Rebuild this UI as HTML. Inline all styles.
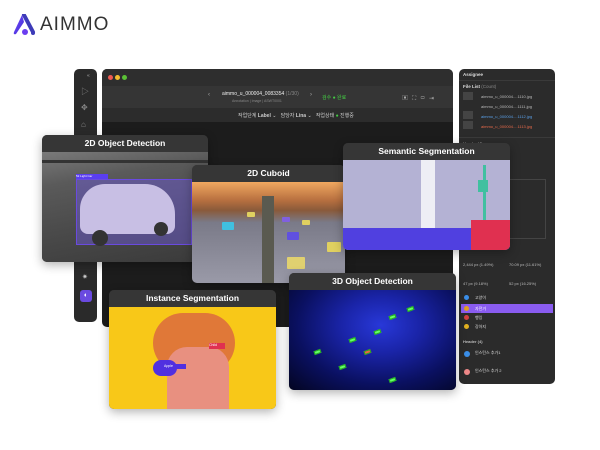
<!DOCTYPE html>
<html><head><meta charset="utf-8"><style>
*{margin:0;padding:0;box-sizing:border-box}
body{width:600px;height:450px;background:#fff;position:relative;overflow:hidden;font-family:"Liberation Sans","Noto Sans CJK KR",sans-serif}
.a{position:absolute}
.card{position:absolute;border-radius:5px;overflow:hidden;background:#333;box-shadow:0 3px 10px rgba(0,0,0,.3)}
.card .h{height:17px;background:#363636;color:#fff;font-weight:bold;font-size:8.5px;text-align:center;line-height:17px}
.card .b{position:absolute;left:0;right:0;top:17px;bottom:0;overflow:hidden}
.t{color:#bbb;font-size:4px;position:absolute}
.bx{position:absolute;width:8px;height:5px;border-radius:1px}
.gb{position:absolute;width:7px;height:4px;background:#6f6;border:1px solid #2a2;transform:rotate(-20deg)}
</style></head><body>
<svg class="a" style="left:12px;top:14px" width="24" height="22" viewBox="0 0 24 22">
<defs><linearGradient id="g" x1="0" y1="0" x2="1" y2="1"><stop offset="0" stop-color="#7b4dff"/><stop offset="1" stop-color="#3a2bd0"/></linearGradient></defs>
<path d="M10 1 L2 18 Q1 21 4 20 L12 8 Z" fill="url(#g)"/><path d="M12 1 L21 18" stroke="#3d3bb8" stroke-width="4" stroke-linecap="round"/>
<circle cx="13" cy="18" r="3" fill="#6b3df0"/><circle cx="21" cy="19" r="2" fill="#3d3bb8"/></svg>
<div class="a" style="left:40px;top:14px;font-size:19px;color:#333;letter-spacing:1px">AIMMO</div>

<div class="a" style="left:74px;top:69px;width:23px;height:253px;background:#2a2a2a;border-radius:5px"></div>
<div class="a" style="left:87px;top:73px;color:#aaa;font-size:5px">«</div>
<div class="a" style="left:81px;top:86px;color:#888;font-size:8px">▷</div>
<div class="a" style="left:81px;top:103px;color:#888;font-size:8px">✥</div>
<div class="a" style="left:81px;top:120px;color:#888;font-size:8px">⌂</div>
<div class="a" style="left:80px;top:290px;width:12px;height:12px;background:#6a4ae0;border-radius:3px;color:#fff;font-size:7px;text-align:center;line-height:12px">◐</div>
<div class="a" style="left:82px;top:273px;color:#ccc;font-size:7px">✷</div>

<div class="a" style="left:102px;top:69px;width:351px;height:258px;background:#1c1c1c;border-radius:5px;overflow:hidden">
<div style="height:17px;background:#2e2e2e"></div>
<div style="height:22px;background:#353535"></div>
<div style="height:14px;background:#2c2c2c"></div>
<div class="a" style="left:6px;top:6px;width:5px;height:5px;border-radius:50%;background:#ee5a52"></div>
<div class="a" style="left:13px;top:6px;width:5px;height:5px;border-radius:50%;background:#f4bd2f"></div>
<div class="a" style="left:20px;top:6px;width:5px;height:5px;border-radius:50%;background:#5bc236"></div>
<div class="a" style="left:106px;top:23px;color:#aaa;font-size:6px">‹</div>
<div class="a" style="left:120px;top:22px;color:#eee;font-size:5px">aimmo_u_000004_0083354 <span style="color:#888">(1/30)</span></div>
<div class="a" style="left:130px;top:30px;color:#888;font-size:3.5px">Annotation | Image | ASWT0001</div>
<div class="a" style="left:136px;top:43px;color:#ccc;font-size:5px">작업단계 <b>Label</b> ⌄ &nbsp; 담당자 <b>Lina</b> ⌄ &nbsp; 작업상태 <span style="color:#4c4">●</span> 진행중</div>
<div class="a" style="left:208px;top:23px;color:#aaa;font-size:6px">›</div>
<div class="a" style="left:220px;top:25px;color:#4c4;font-size:5px">검수 ● 완료</div>
<div class="a" style="left:300px;top:24px;color:#aaa;font-size:6px;letter-spacing:4px">▣⛶▭⇥</div>
</div>

<div class="a" style="left:459px;top:69px;width:96px;height:315px;background:#2b2b2b;border-radius:5px;overflow:hidden">
<div style="color:#ddd;font-size:4.5px;font-weight:bold;padding:3px 4px;border-bottom:1px solid #3a3a3a">Assignee</div>
<div style="color:#ddd;font-size:4.5px;font-weight:bold;padding:3px 4px">File List <span style="color:#888;font-weight:normal">(Count)</span></div>
<div class="t" style="left:4px;top:23px;width:10px;height:8px;background:#444"></div><div class="t" style="left:22px;top:25px">aimmo_u_000004....1110.jpg</div>
<div class="t" style="left:22px;top:35px">aimmo_u_000004....1111.jpg</div>
<div class="t" style="left:4px;top:42px;width:10px;height:8px;background:#444"></div><div class="t" style="left:22px;top:45px;color:#5aa0e8">aimmo_u_000004....1112.jpg</div>
<div class="t" style="left:4px;top:52px;width:10px;height:8px;background:#444"></div><div class="t" style="left:22px;top:55px;color:#e86a4a">aimmo_u_000004....1113.jpg</div>
<div class="a" style="left:0;top:68px;width:96px;height:1px;background:#3a3a3a"></div>
<div class="t" style="left:4px;top:72px;font-weight:bold">Header (4)</div>
<div class="a" style="left:5px;top:110px;width:82px;height:60px;border:1px solid #444"></div>
<div class="t" style="left:4px;top:193px">2,444 px (1.49%)</div><div class="t" style="left:50px;top:193px">70.09 px (11.61%)</div>
<div class="t" style="left:4px;top:212px">47 px (9.18%)</div><div class="t" style="left:50px;top:212px">52 px (16.25%)</div>
<div class="a" style="left:5px;top:226px;width:5px;height:5px;border-radius:50%;background:#3a8ee8"></div><div class="t" style="left:16px;top:226px;color:#ddd">고양이</div>
<div class="a" style="left:2px;top:235px;width:92px;height:9px;background:#8a5cf0"></div>
<div class="a" style="left:5px;top:237px;width:5px;height:5px;border-radius:50%;background:#e0a020"></div><div class="t" style="left:16px;top:237px;color:#fff">자전거</div>
<div class="a" style="left:5px;top:246px;width:5px;height:5px;border-radius:50%;background:#d04040"></div><div class="t" style="left:16px;top:246px;color:#ddd">행잉</div>
<div class="a" style="left:5px;top:255px;width:5px;height:5px;border-radius:50%;background:#e0b020"></div><div class="t" style="left:16px;top:255px;color:#ddd">강아지</div>
<div class="t" style="left:4px;top:270px;font-weight:bold">Header (4)</div>
<div class="a" style="left:5px;top:282px;width:6px;height:6px;border-radius:50%;background:#3a8ee8"></div>
<div class="t" style="left:16px;top:281px;color:#ddd">인스턴스 추가1</div>
<div class="a" style="left:5px;top:300px;width:6px;height:6px;border-radius:50%;background:#e88"></div>
<div class="t" style="left:16px;top:299px;color:#ddd">인스턴스 추가 2</div>
</div>

<div class="card" style="left:42px;top:135px;width:166px;height:127px"><div class="h">2D Object Detection</div>
<div class="b" style="background:linear-gradient(170deg,#7a7a7a 0%,#5a5a5a 25%,#4a4a4a 60%,#3a3a3a 100%)">
<div class="a" style="left:0;top:8px;width:166px;height:3px;background:#333"></div>
<div class="a" style="left:34px;top:27px;width:116px;height:66px;background:rgba(110,90,220,.45);border:1px solid #6a4ae0"></div>
<div class="a" style="left:34px;top:22px;width:32px;height:5px;background:#5a3ef0;color:#fff;font-size:3px">52 Light Car</div>
<div class="a" style="left:38px;top:32px;width:95px;height:50px;background:#c8bfe4;border-radius:25px 30px 8px 8px"></div>
<div class="a" style="left:50px;top:78px;width:16px;height:16px;border-radius:50%;background:#333"></div>
<div class="a" style="left:112px;top:70px;width:14px;height:14px;border-radius:50%;background:#333"></div>
</div></div>

<div class="card" style="left:192px;top:165px;width:153px;height:118px"><div class="h">2D Cuboid</div>
<div class="b" style="background:linear-gradient(180deg,#f0a860 0%,#b87040 18%,#8a5a3a 28%,#7a7a88 40%,#9a9aa8 100%)">
<div class="a" style="left:70px;top:14px;width:12px;height:90px;background:#5a5a50"></div>
<div class="bx" style="left:30px;top:40px;width:12px;height:8px;background:#40c0e0"></div>
<div class="bx" style="left:55px;top:30px;background:#e0d060"></div>
<div class="bx" style="left:95px;top:50px;width:12px;height:8px;background:#6050e0"></div>
<div class="bx" style="left:110px;top:38px;background:#e0d060"></div>
<div class="bx" style="left:90px;top:35px;background:#8060e0"></div>
<div class="bx" style="left:135px;top:60px;width:14px;height:10px;background:#e0d060"></div>
<div class="bx" style="left:95px;top:75px;width:18px;height:12px;background:#e0d070"></div>
</div></div>

<div class="card" style="left:343px;top:143px;width:167px;height:107px"><div class="h">Semantic Segmentation</div>
<div class="b" style="background:#b4b2d4">
<div class="a" style="left:78px;top:0;width:14px;height:70px;background:#eeeef5"></div>
<div class="a" style="left:140px;top:5px;width:3px;height:60px;background:#40c0a0"></div>
<div class="a" style="left:135px;top:20px;width:10px;height:12px;background:#40c0a0"></div>
<div class="a" style="left:0;top:68px;width:167px;height:22px;background:#5040e0"></div>
<div class="a" style="left:128px;top:60px;width:39px;height:30px;background:#e03050"></div>
</div></div>

<div class="card" style="left:289px;top:273px;width:167px;height:117px"><div class="h">3D Object Detection</div>
<div class="b" style="background:radial-gradient(ellipse at 55% 35%,#2838d8 0%,#1a24a8 30%,#0a1060 65%,#030520 100%)">
<div class="gb" style="left:25px;top:60px"></div><div class="gb" style="left:60px;top:48px"></div>
<div class="gb" style="left:75px;top:60px;background:#e64"></div><div class="gb" style="left:85px;top:40px"></div>
<div class="gb" style="left:100px;top:25px"></div><div class="gb" style="left:118px;top:17px"></div>
<div class="gb" style="left:50px;top:75px"></div><div class="gb" style="left:100px;top:88px"></div>
</div></div>

<div class="card" style="left:109px;top:290px;width:167px;height:119px"><div class="h">Instance Segmentation</div>
<div class="b" style="background:#f8c818">
<div class="a" style="left:44px;top:6px;width:82px;height:60px;border-radius:40px;background:#e07838"></div>
<div class="a" style="left:58px;top:40px;width:62px;height:70px;border-radius:20px 20px 0 0;background:#e89080"></div>
<div class="a" style="left:44px;top:53px;width:24px;height:16px;border-radius:8px;background:#5030e0"></div>
<div class="a" style="left:55px;top:57px;width:22px;height:5px;background:#5030e0;color:#fff;font-size:3.5px">Apple</div>
<div class="a" style="left:100px;top:36px;width:16px;height:6px;background:#e03050;color:#fff;font-size:3.5px">Child</div>
</div></div>
</body></html>
